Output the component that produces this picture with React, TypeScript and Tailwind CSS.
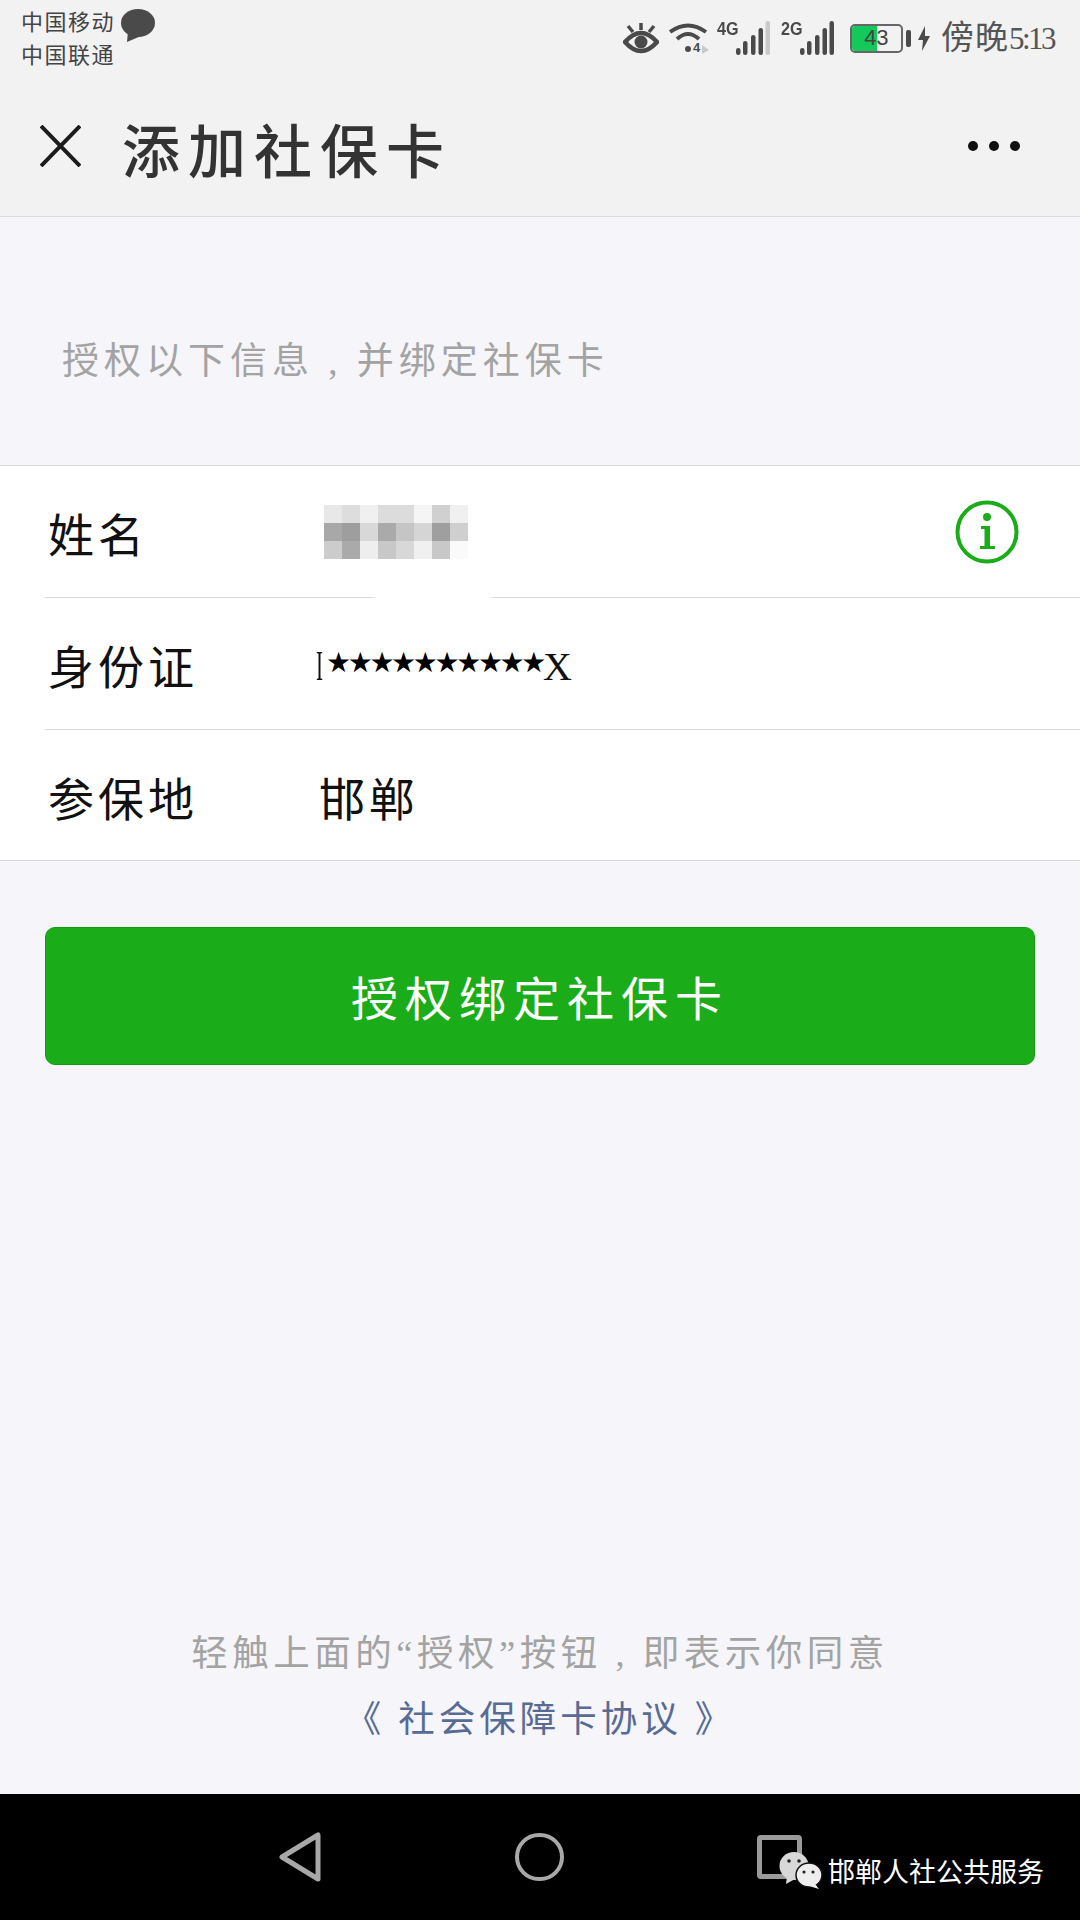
const FONT = 'font-["Liberation_Serif","Noto_Sans_CJK_SC",serif]';

const MOSAIC = [
  '#e8e8e8', '#dddddd', '#f0f0f0', '#dcdcdc', '#dcdcdc', '#f5f5f5', '#d0d0d0', '#f0f0f0',
  '#a8a8a8', '#9e9e9e', '#d8d8d8', '#aaaaaa', '#c5c5c5', '#d5d5d5', '#9f9f9f', '#cfcfcf',
  '#cccccc', '#aaaaaa', '#eeeeee', '#c8c8c8', '#d8d8d8', '#f0f0f0', '#c8c8c8', '#fafafa',
];

function Signal({ label, lastOff }: { label: string; lastOff?: boolean }) {
  return (
    <div className="relative w-[52px] h-[34px]">
      <span className='absolute left-[-1px] top-[-2px] font-["Liberation_Sans",sans-serif] font-bold text-[19px] leading-[19px] text-[#4a4a4a] scale-x-[0.85] origin-left'>
        {label}
      </span>
      <svg viewBox="0 0 52 34" className="w-[52px] h-[34px]" fill="#4a4a4a">
        <rect x="18" y="27" width="4.5" height="7" rx="2.2" />
        <rect x="25" y="20" width="4.5" height="14" rx="2.2" />
        <rect x="33" y="14" width="4.5" height="20" rx="2.2" />
        <rect x="40.5" y="7" width="4.5" height="27" rx="2.2" />
        <rect x="47.5" y="0" width="4.5" height="34" rx="2.2" fill={lastOff ? '#c9c9c9' : '#4a4a4a'} />
      </svg>
    </div>
  );
}

function StatusBar() {
  return (
    <div className="h-[76px] flex items-center justify-between pl-[21px] pr-6 text-[#555]">
      <div className="flex items-start gap-[6px] pt-[2px]">
        <div className="text-[22px] leading-[33px] tracking-[1.5px] text-[#444]">
          <div>中国移动</div>
          <div>中国联通</div>
        </div>
        <svg viewBox="0 0 34 33" className="w-[34px] h-[33px] mt-[3px]" fill="#4a4a4a">
          <ellipse cx="17" cy="14" rx="17" ry="14" />
          <path d="M7 22 L6 33 L20 27 Z" />
        </svg>
      </div>
      <div className="flex items-center">
        <svg viewBox="0 0 36 32" className="w-9 h-8 mr-[10px]" fill="none" stroke="#4a4a4a">
          <path d="M2 20 Q18 2 34 20 Q18 38 2 20 Z" strokeWidth="4.5" />
          <circle cx="18" cy="20" r="6.5" fill="#4a4a4a" stroke="none" />
          <path d="M18 1 V8 M5 4 L10 10 M31 4 L26 10" strokeWidth="3.5" />
        </svg>
        <div className="relative w-10 h-8 mr-[9px]">
          <svg viewBox="0 0 40 32" className="w-10 h-8" fill="none" stroke="#4a4a4a" strokeWidth="4">
            <path d="M1 10 Q19 -3 37 10" />
            <path d="M8 17 Q19 7 30 17" />
            <circle cx="19" cy="27" r="3" fill="#4a4a4a" stroke="none" />
            <path d="M33 23 L40 28 L33 32 Z" fill="#c9c9c9" stroke="none" />
          </svg>
          <span className='absolute left-[24px] top-[19px] font-["Liberation_Sans",sans-serif] font-bold text-[13px] leading-[13px] text-[#4a4a4a]'>
            4
          </span>
        </div>
        <div className="mr-3">
          <Signal label="4G" lastOff />
        </div>
        <div className="mr-4">
          <Signal label="2G" />
        </div>
        <div className="relative w-[53px] h-[29px] rounded-[5px] border-2 border-[#666] overflow-hidden mr-[3px]">
          <div className="w-[25px] h-full bg-[#14c95a]" />
          <span className='absolute inset-0 flex items-center justify-center font-["Liberation_Sans",sans-serif] text-[22px] leading-none text-[#444]'>
            43
          </span>
        </div>
        <div className="w-[5px] h-[17px] bg-[#4a4a4a] rounded-[2px] mr-[7px]" />
        <svg viewBox="0 0 12 25" className="w-3 h-[25px] mr-[11px]" fill="#4a4a4a">
          <path d="M7 0 L0 14 H5 L4 25 L12 10 H7 Z" />
        </svg>
        <span className="text-[33px] leading-none tracking-[1px]">傍晚</span>
        <span className="text-[31px] leading-none tracking-[-2.5px] pr-[2px]">5:13</span>
      </div>
    </div>
  );
}

function InfoIcon() {
  return (
    <svg viewBox="0 0 64 64" className="w-16 h-16 ml-auto mr-[61px]" fill="#1aad19">
      <circle cx="32" cy="32" r="29.5" fill="none" stroke="#1aad19" strokeWidth="4" />
      <circle cx="32" cy="17" r="4" />
      <path d="M26 26 H35 V46 H40 V49 H25 V46 H29.5 V29 H26 Z" />
    </svg>
  );
}

export default function App() {
  return (
    <div className={`${FONT} w-[1080px] h-[1920px] flex flex-col bg-[#f6f5f9]`}>
      <div className="bg-[#f2f2f3] border-b border-[#dcdcdf]">
        <StatusBar />
        <div className="h-[140px] flex items-center justify-between pl-10 pr-[60px]">
          <div className="flex items-center gap-[41px]">
            <svg viewBox="0 0 41 42" className="w-[41px] h-[42px]" stroke="#1c1c1c" strokeWidth="4">
              <path d="M1 1 L40 41 M40 1 L1 41" />
            </svg>
            <span className="text-[58px] leading-none font-medium text-[#333] tracking-[8px] mt-4">添加社保卡</span>
          </div>
          <div className="flex gap-[11px]">
            <div className="w-[10px] h-[10px] rounded-full bg-[#111]" />
            <div className="w-[10px] h-[10px] rounded-full bg-[#111]" />
            <div className="w-[10px] h-[10px] rounded-full bg-[#111]" />
          </div>
        </div>
      </div>

      <div className="h-[248px] flex items-center pl-[62px] pt-[41px] text-[#a3a3a3] text-[37px] tracking-[5px]">
        授权以下信息 , 并绑定社保卡
      </div>

      <div className="bg-white border-y border-[#d9d9d9] text-[46px] text-[#111]">
        <div className="relative ml-[45px] h-[131px] flex items-center tracking-[4px]">
          <span className="w-[271px] pl-[3px] pt-[10px]">姓名</span>
          <div className="ml-2 w-36 h-[54px] grid grid-cols-8 grid-rows-3">
            {MOSAIC.map((c, i) => (
              <div key={i} style={{ backgroundColor: c }} />
            ))}
          </div>
          <InfoIcon />
          <div className="absolute left-[328px] top-[125px] w-[119px] h-[20px] bg-white rounded-full blur-[2px] z-10" />
        </div>
        <div className="ml-[45px] h-[132px] border-t border-[#d9d9d9] flex items-center tracking-[4px]">
          <span className="w-[271px] pl-[3px] pt-[10px]">身份证</span>
          <span className="flex items-center tracking-normal">
            <span className="inline-block w-[10px] text-[42px] scale-x-50 origin-left pt-[6px]">I</span>
            <span className='font-["DejaVu_Sans",sans-serif] text-[28px] leading-none tracking-[-3.4px] mb-[2px] text-black'>
              ★★★★★★★★★★
            </span>
            <span className="text-[40px] pt-[6px]">X</span>
          </span>
        </div>
        <div className="ml-[45px] h-[131px] border-t border-[#d9d9d9] flex items-center tracking-[4px]">
          <span className="w-[271px] pl-[3px] pt-[10px]">参保地</span>
          <span className="ml-[3px] pt-[10px]">邯郸</span>
        </div>
      </div>

      <div className="mx-[45px] mt-[66px] h-[138px] pt-2 rounded-[10px] bg-[#1aad19] border border-[#179b16] flex items-center justify-center text-white text-[47px] tracking-[7px]">
        授权绑定社保卡
      </div>

      <div className="flex-1 flex flex-col justify-end items-center pb-[41px] text-[36.5px] tracking-[4.5px]">
        <div className="text-[#a3a3a3] leading-[66px]">轻触上面的“授权”按钮 , 即表示你同意</div>
        <div className="text-[#576b95] leading-[66px] tracking-[4px]">《 社会保障卡协议 》</div>
      </div>

      <div className="relative h-[126px] bg-black flex items-center pl-[279px]">
        <svg viewBox="0 0 42 50" className="w-[42px] h-[50px] mr-[194px]" fill="none" stroke="#a8a8a8" strokeWidth="5" strokeLinejoin="round">
          <path d="M39 3 V47 L3 25 Z" />
        </svg>
        <div className="w-[49px] h-[48px] rounded-full border-[4px] border-[#a8a8a8] mr-[193px]" />
        <div className="w-[45px] h-[44px] rounded-[4px] border-[5px] border-[#9a9a9a]" />
        <svg viewBox="0 0 44 38" className="absolute left-[779px] top-[57px] w-[44px] h-[38px]">
          <ellipse cx="15" cy="15" rx="14.5" ry="14" fill="#d8d8d8" />
          <path d="M8 25 L7 33 L16 28 Z" fill="#d8d8d8" />
          <circle cx="10" cy="10" r="1.8" fill="#222" />
          <circle cx="20" cy="10" r="1.8" fill="#222" />
          <ellipse cx="30" cy="24" rx="13" ry="12" fill="#eeeeee" stroke="#111" strokeWidth="1.5" />
          <path d="M36 33 L40 38 L30 35 Z" fill="#eeeeee" />
          <circle cx="25" cy="21" r="1.6" fill="#222" />
          <circle cx="34" cy="21" r="1.6" fill="#222" />
        </svg>
        <span className='absolute left-[828px] top-[60px] font-["Noto_Sans_CJK_SC",sans-serif] text-[27px] leading-[34px] text-white'>
          邯郸人社公共服务
        </span>
      </div>
    </div>
  );
}
